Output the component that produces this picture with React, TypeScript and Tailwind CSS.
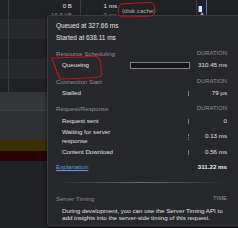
const font = { fontFamily: '"Liberation Sans", Arial, sans-serif' };

type TimingRow = {
  label: string;
  value: string;
  bar?: 'full' | 'tick' | 'dotted';
  lines?: number;
};

function Track({ bar }: { bar?: TimingRow['bar'] }) {
  if (bar === 'full') {
    return (
      <div className="w-[60px] h-[7px] flex flex-col">
        <div className="h-[1px] bg-[#7f7f7f]" />
        <div className="flex flex-1">
          <div className="w-[1px] bg-[#7f7f7f]" />
          <div className="flex-1 bg-[#161617]" />
          <div className="w-[1px] bg-[#7f7f7f]" />
        </div>
        <div className="h-[1px] bg-[#7f7f7f]" />
      </div>
    );
  }
  if (bar === 'dotted') {
    return (
      <div className="w-[60px] flex justify-end pr-[1px]">
        <div className="w-[1px] h-[6px] border-l border-dotted border-[#8a8a8a]" />
      </div>
    );
  }
  return (
    <div className="w-[60px] flex justify-end pr-[1px]">
      <div className="w-[1px] h-[5px] bg-[#7d7d7d]" />
    </div>
  );
}

function Row({ row }: { row: TimingRow }) {
  const tall = row.lines === 2;
  return (
    <div className={`flex items-center ${tall ? 'h-[19px]' : 'h-[12px]'}`}>
      <div className={`flex-1 pl-[6px] text-[#e0e0e0] ${tall ? 'leading-[8.4px]' : ''}`}>
        {row.label.split('\n').map((l) => (
          <div key={l}>{l}</div>
        ))}
      </div>
      <Track bar={row.bar} />
      <div className="w-[37px] text-right text-[#e0e0e0]">{row.value}</div>
    </div>
  );
}

function Section({ title, right }: { title: string; right: string }) {
  return (
    <div className="flex items-center h-[10px] text-[#8e8e8e]">
      <div className="flex-1">{title}</div>
      <div className="text-[5.9px]">{right}</div>
    </div>
  );
}

export default function App() {
  return (
    <div
      className="relative w-[238px] h-[228px] overflow-hidden bg-[#202124] text-[6.2px] leading-none"
      style={font}
    >
      {/* request table behind the popover */}
      <div className="flex flex-col h-full">
        <div className="flex h-[19px] bg-[#202124] leading-[9px]">
          <div className="w-[9px] border-r border-[#3a3b3e]" />
          <div className="w-[72px] border-r border-[#3a3b3e] pr-[8px] pt-[0.5px] text-right">
            <div className="text-[#e6e6e6]">0 B</div>
            <div className="text-[#979797]">16.5 kB</div>
          </div>
          <div className="w-[38px] pr-[2px] pt-[0.5px] text-right">
            <div className="text-[#e6e6e6]">1 ms</div>
            <div className="text-[#979797]">0 ms</div>
          </div>
          <div className="w-[78px] border-r border-[#3a3b3e] pl-[3px] pt-[5.5px] text-[#b4b4b4]">
            (disk cache)
          </div>
          <div className="w-[9px] flex items-start pt-[6px] pl-[1px]">
            <div className="w-[1px] h-[6px] bg-[#4a7fd0]" />
            <div className="w-[3px] h-[6px] bg-[#dfe6f2]" />
          </div>
          <div className="w-[1px] bg-[#3d7ad6]" />
        </div>
        <div className="flex h-[20px] bg-[#28292c]">
          <div className="w-[9px] border-r border-[#3a3b3e]" />
        </div>
        <div className="flex h-[20px] bg-[#202124]">
          <div className="w-[9px] border-r border-[#3a3b3e]" />
        </div>
        <div className="flex h-[20px] bg-[#28292c]">
          <div className="w-[9px] border-r border-[#3a3b3e]" />
        </div>
        <div className="flex h-[13px] bg-[#202124]">
          <div className="w-[9px] border-r border-[#3a3b3e]" />
        </div>
        <div className="h-[18px] bg-[#35363a]" />
        <div className="h-[30px] bg-[#2f3033] border-t border-[#3e3f42]" />
        <div className="h-[11px] bg-[#3a3100]" />
        <div className="h-[10px] bg-[#2a0303]" />
        <div className="flex-1 bg-[#202124]" />
      </div>

      {/* timing popover */}
      <div className="absolute left-[47px] top-[15px] w-[195px] h-[211px] bg-[#27282b] border border-[#3c3d40] rounded-[3px] shadow-[0_1px_4px_rgba(0,0,0,0.6)] pl-[8px] pr-[14px] pt-[4px]">
        <div className="absolute -top-[4px] left-[152px] w-0 h-0 border-l-[2px] border-r-[2px] border-b-[3px] border-l-transparent border-r-transparent border-b-[#9a9a9a]" />

        <div className="h-[12px] flex items-center text-[#e6e6e6] text-[6.5px]">Queued at 327.66 ms</div>
        <div className="h-[12px] flex items-center text-[#e6e6e6] text-[6.5px]">Started at 638.11 ms</div>

        <div className="mt-[5px]">
          <Section title="Resource Scheduling" right="DURATION" />
        </div>
        <Row row={{ label: 'Queueing', value: '310.45 ms', bar: 'full' }} />

        <div className="mt-[6px]">
          <Section title="Connection Start" right="DURATION" />
        </div>
        <Row row={{ label: 'Stalled', value: '79 µs' }} />

        <div className="mt-[5px]">
          <Section title="Request/Response" right="DURATION" />
        </div>
        <div className="mt-[1px]">
          <Row row={{ label: 'Request sent', value: '0' }} />
        </div>
        <Row row={{ label: 'Waiting for server\nresponse', value: '0.13 ms', bar: 'dotted', lines: 2 }} />
        <Row row={{ label: 'Content Download', value: '0.56 ms' }} />

        <div className="mt-[3px] h-[12px] flex items-center">
          <a className="flex-1 text-[#5d9be6] underline underline-offset-[1px]">Explanation</a>
          <div className="font-bold text-[#eeeeee]">311.22 ms</div>
        </div>

        <div className="mt-[9px] h-[1px] bg-linear-to-r from-transparent via-[#6a6b6e] to-transparent" />

        <div className="mt-[10px] h-[12px] flex items-center text-[#8e8e8e]">
          <div className="flex-1">Server Timing</div>
          <div className="text-[5.9px]">TIME</div>
        </div>
        <div className="mt-[2px] pl-[6px] leading-[7px] text-[#e0e0e0]">
          During development, you can use the Server Timing API to add insights into the server-side timing of this request.
        </div>
      </div>

      {/* red annotations */}
      <svg className="absolute inset-0 pointer-events-none" width="238" height="228" viewBox="0 0 238 228" fill="none">
        <path
          d="M121 4 Q135 3 150 2.5 Q155 3 155 9 Q155 15 151 16 Q135 17 122 17 Q118 16 118.5 10 Q118.5 5 121 4 Z"
          stroke="#c8141a"
          strokeWidth="1"
        />
        <path
          d="M52 58 Q75 57 96 56.5 Q100 58 100.5 63 L101.5 75 Q100 77.5 95 77.5 Q78 78.5 60 79 Q56 70 52 58 Z"
          stroke="#c8141a"
          strokeWidth="1.1"
        />
      </svg>
    </div>
  );
}
